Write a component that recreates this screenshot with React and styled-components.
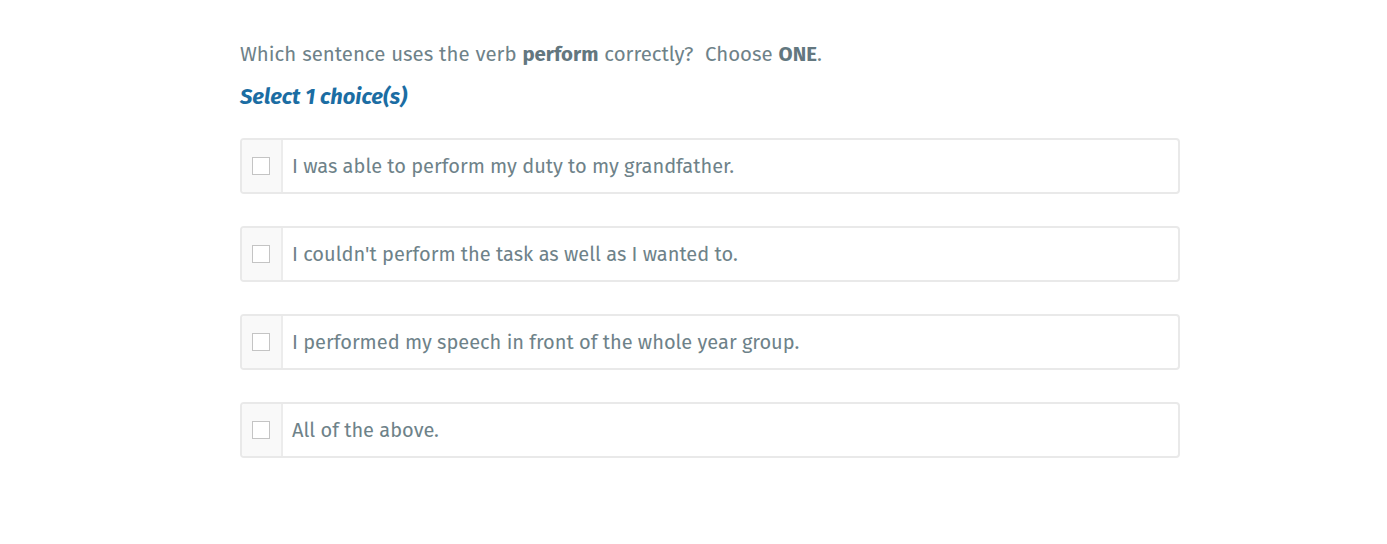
import React from 'react';
import styled, { createGlobalStyle } from 'styled-components';

//-- STYLES --//
const Global = createGlobalStyle`
  body {
    margin: 0;
    background: #fff;
    font-family: 'Fira Sans', 'Open Sans', 'Noto Sans', sans-serif;
  }
`;

const Page = styled.div`
  padding: 39px 0 0 240px;
  width: 940px;
`;

const Question = styled.p`
  margin: 0;
  font-size: 20.4px;
  line-height: 30px;
  color: #6e8289;
  word-spacing: 0.5px;

  b {
    font-weight: 700;
    color: #63777f;
  }
`;

const Hint = styled.p`
  margin: 13px 0 0;
  font-size: 21.9px;
  line-height: 30px;
  font-weight: 700;
  font-style: italic;
  color: #1b6da3;
`;

const Choices = styled.div`
  display: flex;
  flex-direction: column;
  gap: 32px;
  margin-top: 26px;
`;

const Choice = styled.label`
  display: flex;
  height: 56px;
  box-sizing: border-box;
  border: 2px solid #e9e9e9;
  border-radius: 4px;
  overflow: hidden;
  cursor: pointer;
`;

const BoxCell = styled.div`
  width: 39px;
  flex: none;
  display: flex;
  align-items: center;
  justify-content: center;
  background: #f9f9f9;
  border-right: 2px solid #ececec;
`;

const Box = styled.span`
  width: 18px;
  height: 18px;
  box-sizing: border-box;
  border: 1px solid #c4c4c4;
  background: #fff;
  margin-right: 1px;
`;

const Text = styled.div`
  display: flex;
  align-items: center;
  padding-left: 9px;
  font-size: 20px;
  color: #6e8289;
`;

const options = [
  'I was able to perform my duty to my grandfather.',
  "I couldn't perform the task as well as I wanted to.",
  'I performed my speech in front of the whole year group.',
  'All of the above.',
];

//-- COMPONENT --//
const App = () => {
  return (
    <Page>
      <Global />
      <Question>
        Which sentence uses the verb <b>perform</b> correctly?&nbsp; Choose <b>ONE</b>.
      </Question>
      <Hint>Select 1 choice(s)</Hint>
      <Choices>
        {options.map(o => (
          <Choice key={o}>
            <BoxCell><Box /></BoxCell>
            <Text>{o}</Text>
          </Choice>
        ))}
      </Choices>
    </Page>
  );
};

export default App;
